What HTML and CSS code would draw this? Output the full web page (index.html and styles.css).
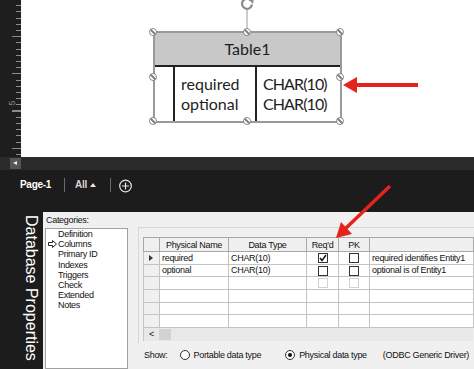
FILE: index.html
```html
<!DOCTYPE html>
<html lang="en">
<head>
  <meta charset="UTF-8">
  <meta name="viewport" content="width=device-width, initial-scale=1.0">
  <title>Database Properties</title>
  <link rel="stylesheet" href="styles.css">
</head>
<body>
  <div class="designer">
    <div class="ruler"><span class="ruler-num">5</span></div>
    <div class="canvas">
      <svg class="rotate-handle" width="18" height="36" viewBox="0 0 18 36">
        <path d="M12.5 3.2 A5 5 0 1 0 14 7.5" fill="none" stroke="#8a8a8a" stroke-width="2.2"/>
        <path d="M9.5 1.5 L16 0.5 L15 7 Z" fill="#8a8a8a"/>
        <line x1="9" y1="12" x2="9" y2="36" stroke="#9a9a9a" stroke-width="1"/>
      </svg>
      <div class="entity">
        <div class="entity-title">Table1</div>
        <div class="entity-body">
          <div class="entity-key"></div>
          <div class="entity-names">required<br>optional</div>
          <div class="entity-types">CHAR(10)<br>CHAR(10)</div>
        </div>
        <span class="handle h-tl"></span>
        <span class="handle h-tm"></span>
        <span class="handle h-tr"></span>
        <span class="handle h-ml"></span>
        <span class="handle h-mr"></span>
        <span class="handle h-bl"></span>
        <span class="handle h-bm"></span>
        <span class="handle h-br"></span>
      </div>
    </div>
  </div>

  <div class="hscroll"><span class="scroll-btn"></span></div>

  <div class="pagebar">
    <span class="page-tab">Page-1</span>
    <span class="sep"></span>
    <span class="page-all">All <span class="caret"></span></span>
    <span class="sep sep-2"></span>
    <svg class="page-add" width="13" height="13" viewBox="0 0 13 13">
      <circle cx="6.5" cy="6.5" r="5.8" fill="none" stroke="#e6e6e6" stroke-width="1.2"/>
      <path d="M6.5 3v7M3 6.5h7" stroke="#e6e6e6" stroke-width="1.2"/>
    </svg>
  </div>

  <div class="props">
    <div class="props-title"><span>Database Properties</span></div>
    <div class="props-panel">
      <div class="categories">
        <div class="cat-label">Categories:</div>
        <ul class="cat-list">
          <li>Definition</li>
          <li class="current">
            <svg class="cat-arrow" width="9" height="8" viewBox="0 0 9 8">
              <path d="M0.5 2.5h4v-2l4 3.5-4 3.5v-2h-4z" fill="#fff" stroke="#222" stroke-width="1"/>
            </svg>Columns</li>
          <li>Primary ID</li>
          <li>Indexes</li>
          <li>Triggers</li>
          <li>Check</li>
          <li>Extended</li>
          <li>Notes</li>
        </ul>
      </div>

      <div class="columns-pane">
        <div class="grid-box">
          <table class="grid">
            <colgroup>
              <col class="c-head">
              <col class="c-name">
              <col class="c-type">
              <col class="c-req">
              <col class="c-pk">
              <col class="c-desc">
            </colgroup>
            <tr>
              <th class="row-head"></th>
              <th>Physical Name</th>
              <th>Data Type</th>
              <th>Req'd</th>
              <th>PK</th>
              <th></th>
            </tr>
            <tr>
              <td class="row-head"><span class="row-marker"></span></td>
              <td>required</td>
              <td>CHAR(10)</td>
              <td class="mid"><span class="cb checked"><svg width="8" height="8" viewBox="0 0 8 8"><path d="M1 4l2 2.5 4-5.5" fill="none" stroke="#111" stroke-width="1.4"/></svg></span></td>
              <td class="mid"><span class="cb"></span></td>
              <td>required identifies Entity1</td>
            </tr>
            <tr>
              <td class="row-head"></td>
              <td>optional</td>
              <td>CHAR(10)</td>
              <td class="mid"><span class="cb"></span></td>
              <td class="mid"><span class="cb"></span></td>
              <td>optional is of Entity1</td>
            </tr>
            <tr>
              <td class="row-head"></td>
              <td></td>
              <td></td>
              <td class="mid"><span class="cb faded"></span></td>
              <td class="mid"><span class="cb faded"></span></td>
              <td></td>
            </tr>
            <tr><td class="row-head"></td><td></td><td></td><td></td><td></td><td></td></tr>
            <tr><td class="row-head"></td><td></td><td></td><td></td><td></td><td></td></tr>
            <tr><td class="row-head"></td><td></td><td></td><td></td><td></td><td></td></tr>
          </table>
          <div class="grid-scroll">
            <span class="gs-left">&lt;</span>
            <span class="gs-thumb"></span>
          </div>
        </div>

        <div class="show-row">
          <span>Show:</span>
          <span class="radio"></span>
          <span class="radio-label">Portable data type</span>
          <span class="radio on"></span>
          <span class="radio-label">Physical data type</span>
          <span class="driver">(ODBC Generic Driver)</span>
        </div>
      </div>
    </div>
  </div>

  <svg class="annotations" width="474" height="369" viewBox="0 0 474 369">
    <line x1="354" y1="85" x2="418" y2="85" stroke="#e5231d" stroke-width="4"/>
    <polygon points="343,85 357,77 357,93" fill="#e5231d"/>
    <line x1="390" y1="186" x2="345" y2="229" stroke="#e5231d" stroke-width="3.5"/>
    <polygon points="336,238 341,222 352,234" fill="#e5231d"/>
  </svg>
</body>
</html>
```

FILE: styles.css
```css
* {
  box-sizing: border-box;
}
body {
  margin: 0;
  width: 474px;
  height: 369px;
  overflow: hidden;
  position: relative;
  background: #1c1c1c;
  font-family: "Liberation Sans", Arial, sans-serif;
}

/* diagram area */
.designer {
  display: flex;
  height: 157px;
}
.ruler {
  width: 21px;
  position: relative;
  background-color: #1e1e1e;
  background-image:
    repeating-linear-gradient(to bottom, transparent 0 5.2px, #8c8c8c 5.2px 6.2px),
    repeating-linear-gradient(to bottom, transparent 0 36px, #8c8c8c 36px 37.2px);
  background-size: 5px 100%, 9px 100%;
  background-position: right top, right top;
  background-repeat: no-repeat;
}
.ruler-num {
  position: absolute;
  left: 9px;
  top: 98px;
  color: #8c8c8c;
  font-size: 9px;
  transform: rotate(-90deg);
}
.canvas {
  flex: 1;
  position: relative;
  background: #fff;
}
.rotate-handle {
  position: absolute;
  left: 217px;
  top: -3px;
}
.entity {
  position: absolute;
  left: 132px;
  top: 31px;
  width: 189px;
  height: 92px;
  border: 2px solid #9a9a9a;
  display: flex;
  flex-direction: column;
  font-family: Lato, "Open Sans", sans-serif;
  font-size: 16px;
  color: #1e1e1e;
}
.entity-title {
  height: 34px;
  background: #c8c8c8;
  border-bottom: 2px solid #222;
  text-align: center;
  line-height: 32px;
}
.entity-body {
  flex: 1;
  display: flex;
  background: #fff;
}
.entity-key {
  width: 20px;
  border-right: 2px solid #222;
}
.entity-names {
  width: 82px;
  border-right: 2px solid #222;
  padding: 7px 0 0 6px;
  line-height: 20px;
}
.entity-types {
  flex: 1;
  padding: 7px 0 0 6px;
  line-height: 20px;
  letter-spacing: -0.9px;
}
.handle {
  position: absolute;
  width: 8px;
  height: 8px;
  border-radius: 50%;
  border: 1.5px solid #8a8a8a;
  background: linear-gradient(45deg, #fff 38%, #8a8a8a 38% 62%, #fff 62%);
}
.h-tl { left: -6px; top: -5px; }
.h-tm { left: 88px; top: -5px; }
.h-tr { left: 181px; top: -5px; }
.h-ml { left: -6px; top: 40px; }
.h-mr { left: 181px; top: 40px; }
.h-bl { left: -6px; top: 84px; }
.h-bm { left: 88px; top: 84px; }
.h-br { left: 181px; top: 84px; }

/* strip under the canvas */
.hscroll {
  height: 13px;
  background: #2b2b2b;
  padding: 1px 0 0 10px;
}
.scroll-btn {
  display: block;
  width: 11px;
  height: 11px;
  background: #555;
  position: relative;
}
.scroll-btn::after {
  content: "";
  position: absolute;
  left: 3px;
  top: 3px;
  border-right: 4px solid #eee;
  border-top: 2.5px solid transparent;
  border-bottom: 2.5px solid transparent;
}

/* page tabs */
.pagebar {
  height: 42px;
  display: flex;
  align-items: flex-start;
  padding: 8px 0 0 20px;
}
.pagebar > * {
  height: 14px;
}
.page-tab {
  color: #fff;
  font-weight: bold;
  font-size: 10px;
  line-height: 14px;
  letter-spacing: -0.3px;
  margin-right: 13px;
}
.sep {
  width: 1px;
  background: #6a6a6a;
  margin-right: 10px;
}
.sep-2 {
  margin-left: 14px;
  margin-right: 8px;
}
.page-all {
  color: #d4d4d4;
  font-weight: bold;
  font-size: 10px;
  line-height: 14px;
  letter-spacing: -0.3px;
  display: flex;
  align-items: center;
}
.caret {
  margin-left: 3px;
  border-bottom: 4px solid #e6e6e6;
  border-left: 3px solid transparent;
  border-right: 3px solid transparent;
  height: 0;
}
.page-add {
  margin-top: 1px;
}

/* database properties dock */
.props {
  display: flex;
  height: 157px;
}
.props-title {
  width: 45px;
  padding: 3px 0 0 22px;
}
.props-title span {
  display: block;
  writing-mode: vertical-rl;
  color: #fff;
  font-size: 16px;
  line-height: 18px;
}
.props-panel {
  flex: 1;
  display: flex;
  background: #f0f0f0;
  font-size: 9px;
  letter-spacing: -0.3px;
  color: #111;
}
.categories {
  width: 86px;
  padding-left: 2px;
  display: flex;
  flex-direction: column;
}
.cat-label {
  height: 16px;
  padding: 3px 0 0 1px;
  line-height: 11px;
}
.cat-list {
  flex: 1;
  margin: 0;
  padding: 0 0 0 12px;
  list-style: none;
  background: #fff;
  border: 1px solid #a0a0a0;
  width: 83px;
}
.cat-list li {
  height: 10.2px;
  line-height: 10.2px;
  position: relative;
}
.cat-arrow {
  position: absolute;
  left: -10px;
  top: 1px;
}
.columns-pane {
  flex: 1;
  padding: 15px 0 0 9px;
  overflow: hidden;
}
.grid-box {
  border-top: 1px solid #d6d6d6;
  border-left: 1px solid #d6d6d6;
  padding: 9px 0 3px 4px;
}
.grid {
  border-collapse: collapse;
  table-layout: fixed;
  width: 330px;
  background: #fff;
}
.c-head { width: 16px; }
.c-name { width: 69px; }
.c-type { width: 78px; }
.c-req { width: 32px; }
.c-pk { width: 31px; }
.c-desc { width: 104px; }
.grid th,
.grid td {
  border: 1px solid #c4c4c4;
  height: 12.67px;
  padding: 0 0 0 2px;
  white-space: nowrap;
  overflow: hidden;
  text-align: left;
  font-weight: normal;
  line-height: 10px;
}
.grid th {
  height: 14px;
  text-align: center;
  background: #f0f0f0;
  border-color: #a8a8a8;
  padding: 0;
}
.grid .row-head {
  background: #f0f0f0;
  padding: 0;
}
.grid .mid {
  text-align: center;
  padding: 0;
}
.row-marker {
  display: block;
  width: 0;
  height: 0;
  margin-left: 5px;
  border-left: 4px solid #333;
  border-top: 3.5px solid transparent;
  border-bottom: 3.5px solid transparent;
}
.cb {
  display: inline-block;
  width: 10px;
  height: 10px;
  border: 1px solid #333;
  background: #fff;
  vertical-align: middle;
  line-height: 0;
}
.cb.faded {
  border-color: #d2d2d2;
}
.grid-scroll {
  width: 330px;
  height: 13px;
  background: #e8e8e8;
  border-left: 1px solid #c4c4c4;
  display: flex;
  align-items: center;
}
.gs-left {
  width: 15px;
  text-align: center;
  font-size: 9px;
}
.gs-thumb {
  width: 12px;
  height: 11px;
  background: #d2d2d2;
}
.show-row {
  margin-top: 4px;
  height: 14px;
  padding-left: 6px;
  display: flex;
  align-items: center;
  white-space: nowrap;
}
.radio {
  width: 10px;
  height: 10px;
  border: 1px solid #333;
  border-radius: 50%;
  background: #fff;
  margin: 0 4px 0 12px;
  position: relative;
}
.radio.on {
  margin-left: 24px;
}
.radio.on::after {
  content: "";
  position: absolute;
  left: 2px;
  top: 2px;
  width: 4px;
  height: 4px;
  border-radius: 50%;
  background: #111;
}
.driver {
  margin-left: 16px;
}

.annotations {
  position: absolute;
  left: 0;
  top: 0;
  pointer-events: none;
}
```
